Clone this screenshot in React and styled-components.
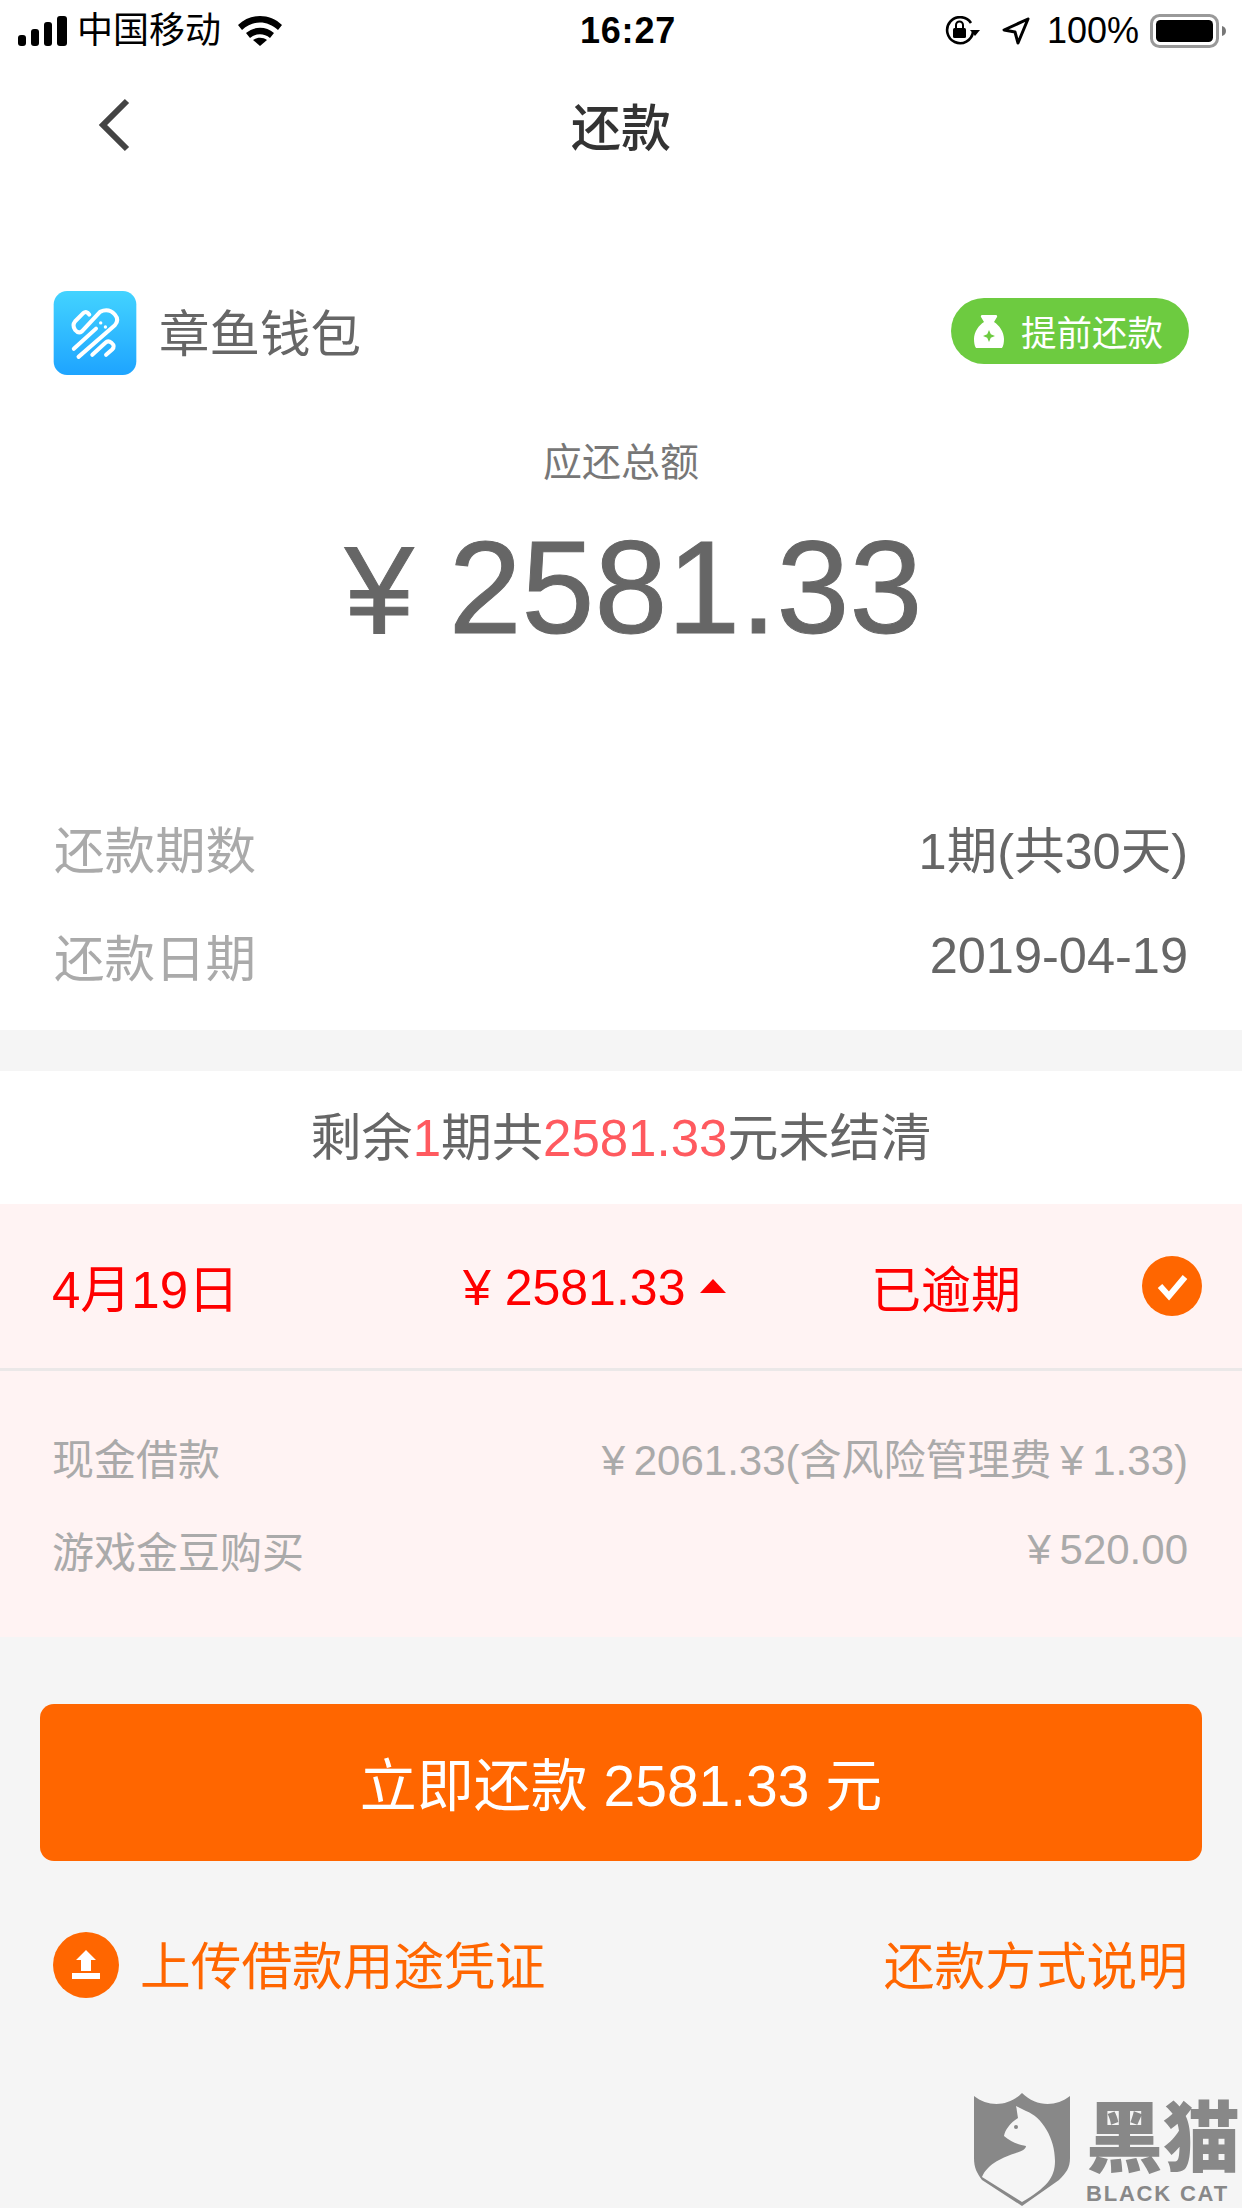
import React from "react";
import styled, { createGlobalStyle } from "styled-components";

const Global = createGlobalStyle`
  html, body { margin: 0; padding: 0; background: #f5f5f5; }
  body { font-family: "Liberation Sans", "Noto Sans CJK SC", sans-serif; }
  * { box-sizing: border-box; }
`;

const Page = styled.div`
  position: relative;
  width: 1242px;
  height: 2208px;
  overflow: hidden;
  background: #f5f5f5;
`;

const Top = styled.section`
  background: #fff;
  height: 1030px;
`;

const StatusBar = styled.div`
  display: grid;
  grid-template-columns: 1fr auto 1fr;
  align-items: center;
  height: 62px;
  padding: 0 16px 0 18px;
  color: #000;
  font-size: 36px;
`;

const StatusSide = styled.div`
  display: flex;
  align-items: center;
  justify-content: ${(p) => p.$end ? "flex-end" : "flex-start"};
  gap: ${(p) => p.$gap}px;
`;

const Carrier = styled.span`
  font-weight: 400;
  margin-right: 8px;
  line-height: 1;
`;

const Clock = styled.span`
  font-weight: 700;
  font-size: 36px;
  letter-spacing: 0.8px;
  margin-left: 12px;
`;

const Percent = styled.span`
  margin: 0 -3px 0 3px;
`;

const NavBar = styled.div`
  position: relative;
  display: flex;
  align-items: center;
  justify-content: center;
  height: 126px;
`;

const BackIcon = styled.svg`
  position: absolute;
  left: 97px;
  top: 36px;
  width: 36px;
  height: 54px;
`;

const Title = styled.h1`
  margin: 0 0 3px;
  font-size: 50px;
  font-weight: 500;
  color: #333;
`;

const AppHead = styled.div`
  display: flex;
  align-items: center;
  justify-content: space-between;
  margin-top: 103px;
  height: 84px;
  padding: 0 53px 0 53px;
`;

const Brand = styled.div`
  display: flex;
  align-items: center;
  gap: 22px;
  font-size: 50.5px;
  color: #666;
`;

const BrandName = styled.span`
  margin-bottom: 6px;
`;

const AppIcon = styled.svg`
  width: 84px;
  height: 84px;
`;

const Pill = styled.div`
  display: flex;
  align-items: center;
  gap: 16px;
  width: 238px;
  height: 66px;
  margin-bottom: 4px;
  padding-left: 22px;
  border-radius: 33px;
  background: #6dcb40;
  color: #fff;
  font-size: 35.5px;
`;

const PillText = styled.span`
  margin-bottom: 2px;
`;

const TotalLabel = styled.div`
  margin-top: 58px;
  text-align: center;
  font-size: 39px;
  line-height: 60px;
  color: #777;
`;

const Amount = styled.div`
  margin-top: 20px;
  padding-left: 25px;
  display: flex;
  justify-content: center;
  align-items: baseline;
  gap: 35px;
  font-size: 131px;
  line-height: 150px;
  color: #666;
  -webkit-text-stroke: 1px #666;
`;

const Yen = styled.span`
  font-size: 124px;
`;

const InfoList = styled.div`
  margin-top: 128px;
  padding: 0 54px;
`;

const InfoRow = styled.div`
  display: flex;
  align-items: center;
  justify-content: space-between;
  height: 108px;
`;

const InfoLabel = styled.span`
  font-size: 50.5px;
  color: #aaa;
`;

const InfoValue = styled.span`
  font-size: 50.5px;
  color: #666;
`;

const Remaining = styled.div`
  margin-top: 41px;
  height: 133px;
  padding-bottom: 8px;
  display: flex;
  align-items: center;
  justify-content: center;
  background: #fff;
  font-size: 51px;
  color: #666;
`;

const Hot = styled.span`
  color: #ff5a5f;
`;

const Plan = styled.section`
  background: #fff3f3;
`;

const PlanHead = styled.div`
  display: grid;
  grid-template-columns: 408px 412px 1fr auto;
  align-items: center;
  height: 167px;
  padding: 0 40px 0 52px;
  border-bottom: 3px solid #ebe8e8;
  color: #f00;
  font-size: 51px;
`;

const PlanMoney = styled.span`
  display: flex;
  align-items: center;
  gap: 15px;
  margin: 3px 0 0 3px;
  font-size: 50px;
`;

const PlanState = styled.span`
  font-size: 50px;
  margin-left: -1px;
`;

const Caret = styled.i`
  width: 0;
  height: 0;
  margin-bottom: 3px;
  border-left: 13px solid transparent;
  border-right: 13px solid transparent;
  border-bottom: 14px solid #f00;
`;

const CheckIcon = styled.svg`
  width: 60px;
  height: 60px;
`;

const PlanBody = styled.div`
  padding: 39px 54px 41px 52px;
`;

const DetailRow = styled.div`
  display: flex;
  align-items: center;
  justify-content: space-between;
  height: 93px;
  font-size: 42px;
  word-spacing: -3px;
  color: #aaa;
`;

const PayButton = styled.button`
  display: block;
  width: 1162px;
  height: 157px;
  margin: 67px 0 0 40px;
  padding: 0 0 4px;
  border: 0;
  border-radius: 14px;
  background: #ff6600;
  color: #fff;
  font-family: inherit;
  font-size: 57px;
`;

const Footer = styled.div`
  display: flex;
  align-items: center;
  justify-content: space-between;
  margin-top: 71px;
  padding: 0 54px 0 53px;
  height: 66px;
  color: #ff6600;
  font-size: 50.7px;
`;

const FooterLink = styled.div`
  display: flex;
  align-items: center;
  gap: 21px;
`;

const FooterText = styled.span`
  margin-bottom: 5px;
`;

const UploadIcon = styled.svg`
  width: 66px;
  height: 66px;
`;

const Watermark = styled.div`
  position: absolute;
  left: 974px;
  top: 2093px;
  display: flex;
  gap: 15px;
`;

const Shield = styled.svg`
  width: 97px;
  height: 115px;
`;

const MarkText = styled.div`
  display: flex;
  flex-direction: column;
  color: #888;
`;

const MarkCn = styled.span`
  font-size: 77px;
  font-weight: 900;
  line-height: 80px;
  margin-top: 6px;
  white-space: nowrap;
`;

const MarkEn = styled.span`
  font-size: 22px;
  font-weight: 700;
  line-height: 24px;
  letter-spacing: 1.8px;
  white-space: nowrap;
  margin-top: 3px;
`;

const Signal = () => (
  <svg width="50" height="30" viewBox="0 0 50 30" fill="#000">
    <rect x="0" y="19" width="8" height="11" rx="3" />
    <rect x="13" y="13" width="8" height="17" rx="3" />
    <rect x="26" y="6" width="8" height="24" rx="3" />
    <rect x="39" y="0" width="10" height="30" rx="3" />
  </svg>
);

const Wifi = () => (
  <svg width="44" height="30" viewBox="0 0 44 30" fill="#000">
    <path d="M0 9C12-3 32-3 44 9l-4 5C29 4 15 4 4 14z" />
    <path d="M8 17c8-7 20-7 28 0l-4 5c-6-5-14-5-20 0z" />
    <path d="M15 24c4-3 10-3 14 0l-7 6z" />
  </svg>
);

const RotationLock = () => (
  <svg width="44" height="30" viewBox="0 0 44 30" fill="none">
    <path d="M29 17a13 13 0 1 1-2-9" stroke="#000" strokeWidth="2.6" transform="translate(0 -1)" />
    <path d="M26 14h10l-5 6z" fill="#000" />
    <rect x="9" y="12" width="13" height="10" rx="1.5" fill="#000" />
    <path d="M12 12V9a3.5 3.5 0 0 1 7 0v3" stroke="#000" strokeWidth="2" />
  </svg>
);

const Arrow = () => (
  <svg width="28" height="28" viewBox="0 0 28 28" fill="none">
    <path d="M26 2 2 13l11 2 3 11z" stroke="#000" strokeWidth="3" strokeLinejoin="round" />
  </svg>
);

const Battery = () => (
  <svg width="76" height="34" viewBox="0 0 76 34">
    <rect x="1.5" y="1.5" width="66" height="31" rx="8" fill="none" stroke="#999" strokeWidth="3" />
    <rect x="6" y="6" width="57" height="22" rx="4.5" fill="#000" />
    <path d="M72 12c2.500.5 4 2.500 4 5s-1.500 4.500-4 5z" fill="#777" />
  </svg>
);

const MoneyBag = () => (
  <svg width="32" height="34" viewBox="0 0 32 34">
    <path d="M9 1h14c1 0 1.500 1 1 2l-3 5c5 3 10 10 10 17 0 3-.5 7-2 9H3c-1.500-2-2-6-2-9 0-7 5-14 10-17L8 3c-.5-1 0-2 1-2z" fill="#fff" />
    <path d="M16 16l1.800 4.200L22 22l-4.200 1.800L16 28l-1.800-4.200L10 22l4.200-1.800z" fill="#6dcb40" />
  </svg>
);

const Octopus = () => (
  <AppIcon viewBox="10 10 246 250">
    <defs>
      <linearGradient id="ocean" x1="0" y1="0" x2="0" y2="1">
        <stop offset="0" stopColor="#43d3ff" />
        <stop offset="1" stopColor="#1ea4ff" />
      </linearGradient>
    </defs>
    <rect x="10" y="10" width="246" height="250" rx="40" fill="url(#ocean)" />
    <g fill="none" stroke="#fff" strokeWidth="12" strokeLinecap="round" strokeLinejoin="round">
      <path d="M84 206 192 112Q206 96 192 80 174 60 148 72L94 130Q84 138 74 126 64 112 74 100L98 76Q108 68 116 80" />
      <path d="M70 182 136 122" />
      <path d="M125 200 164 164Q172 156 182 164 194 174 184 184L166 200" />
    </g>
    <circle cx="150" cy="105" r="5" fill="#fff" />
    <circle cx="164" cy="117" r="5" fill="#fff" />
  </AppIcon>
);

export default function App() {
  return (
    <Page>
      <Global />
      <Top>
        <StatusBar>
          <StatusSide $gap={9}>
            <Signal />
            <Carrier>中国移动</Carrier>
            <Wifi />
          </StatusSide>
          <Clock>16:27</Clock>
          <StatusSide $end $gap={14}>
            <RotationLock />
            <Arrow />
            <Percent>100%</Percent>
            <Battery />
          </StatusSide>
        </StatusBar>
        <NavBar>
          <BackIcon viewBox="0 0 36 54" fill="none">
            <path d="M30 3 6 27l24 24" stroke="#444" strokeWidth="6" />
          </BackIcon>
          <Title>还款</Title>
        </NavBar>
        <AppHead>
          <Brand>
            <Octopus />
            <BrandName>章鱼钱包</BrandName>
          </Brand>
          <Pill>
            <MoneyBag />
            <PillText>提前还款</PillText>
          </Pill>
        </AppHead>
        <TotalLabel>应还总额</TotalLabel>
        <Amount>
          <Yen>¥</Yen>
          <span>2581.33</span>
        </Amount>
        <InfoList>
          <InfoRow>
            <InfoLabel>还款期数</InfoLabel>
            <InfoValue>1期(共30天)</InfoValue>
          </InfoRow>
          <InfoRow>
            <InfoLabel>还款日期</InfoLabel>
            <InfoValue>2019-04-19</InfoValue>
          </InfoRow>
        </InfoList>
      </Top>
      <Remaining>
        <span>
          剩余<Hot>1</Hot>期共<Hot>2581.33</Hot>元未结清
        </span>
      </Remaining>
      <Plan>
        <PlanHead>
          <span>4月19日</span>
          <PlanMoney>
            <span>¥ 2581.33</span>
            <Caret />
          </PlanMoney>
          <PlanState>已逾期</PlanState>
          <CheckIcon viewBox="0 0 60 60">
            <circle cx="30" cy="30" r="30" fill="#ff6600" />
            <path d="M18 30l9 10 16-19" fill="none" stroke="#fff" strokeWidth="6" />
          </CheckIcon>
        </PlanHead>
        <PlanBody>
          <DetailRow>
            <span>现金借款</span>
            <span>¥ 2061.33(含风险管理费 ¥ 1.33)</span>
          </DetailRow>
          <DetailRow>
            <span>游戏金豆购买</span>
            <span>¥ 520.00</span>
          </DetailRow>
        </PlanBody>
      </Plan>
      <PayButton>立即还款 2581.33 元</PayButton>
      <Footer>
        <FooterLink>
          <UploadIcon viewBox="0 0 66 66">
            <circle cx="33" cy="33" r="33" fill="#ff6600" />
            <path d="M33 18l10 10h-5v11H28V28h-5z" fill="#fff" />
            <rect x="19" y="41" width="28" height="6" fill="#fff" />
          </UploadIcon>
          <FooterText>上传借款用途凭证</FooterText>
        </FooterLink>
        <FooterText>还款方式说明</FooterText>
      </Footer>
      <Watermark>
        <Shield viewBox="0 0 97 115">
          <path d="M0 3C14 14 34 14 48 0c14 14 34 14 48 3v62c0 10-4 15-11 22L48 113 8 87C3 80 0 75 0 65z" fill="#888" />
          <path d="M42 13l10 5c16 6 29 27 29 50 0 17-9 27-33 41L8 84c6-14 22-20 34-24 6-2 10-4 10-7-6-1-14-3-22-10 1-6 6-13 14-18-1-5-1-8-2-12z" fill="#f5f5f5" />
          <circle cx="42" cy="34" r="2" fill="#888" />
        </Shield>
        <MarkText>
          <MarkCn>黑猫</MarkCn>
          <MarkEn>BLACK CAT</MarkEn>
        </MarkText>
      </Watermark>
    </Page>
  );
}
